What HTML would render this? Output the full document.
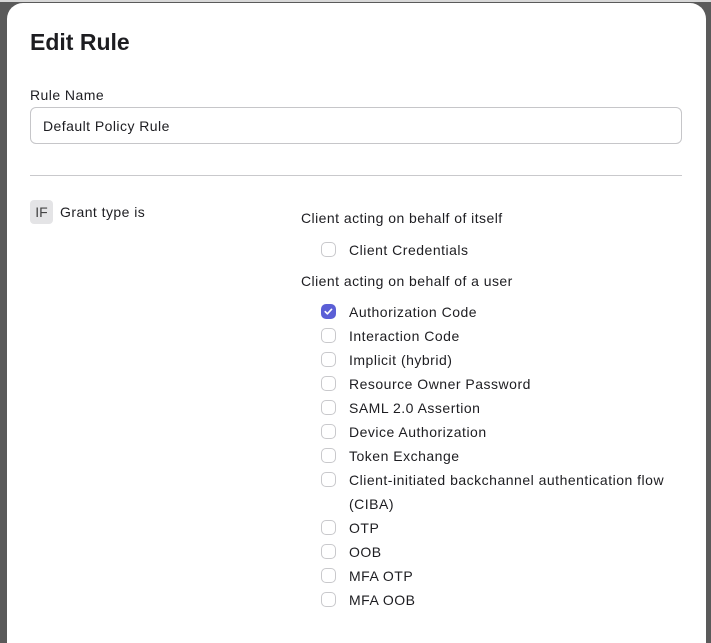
<!DOCTYPE html>
<html><head><style>
body{margin:0;width:711px;height:629px;overflow:hidden;background:#5a5a5a;font-family:"Liberation Sans",sans-serif;position:relative}
.top{position:absolute;left:0;top:0;width:711px;height:2px;background:#d8d8d8}
.modal{position:absolute;left:7px;top:3px;width:699px;height:640px;background:#fff;border-radius:16px 16px 0 0}
.a{position:absolute;color:#1d1d21;white-space:nowrap;letter-spacing:0.45px}
.cb{position:absolute;left:321px;width:13px;height:13px;border:1.5px solid #c9c9cc;border-radius:5px;background:#fff}
.lbl{position:absolute;left:349px;font-size:14px;color:#1d1d21;letter-spacing:0.5px;white-space:nowrap}
</style></head><body>
<div class="top"></div>
<div class="modal"></div>
<div class="a" style="left:30px;top:29px;font-size:23px;font-weight:bold;letter-spacing:0px">Edit Rule</div>
<div class="a" style="left:30px;top:87px;font-size:14px">Rule Name</div>
<div style="position:absolute;left:30px;top:107px;width:650px;height:35px;border:1px solid #c6c6c9;border-radius:6px;background:#fff"></div>
<div class="a" style="left:43px;top:118px;font-size:14px">Default Policy Rule</div>
<div style="position:absolute;left:30px;top:175px;width:652px;height:1px;background:#c9c9cc"></div>
<div style="position:absolute;left:30px;top:200px;width:23px;height:24px;background:#e4e4e6;border-radius:4px;font-size:14px;color:#444;text-align:center;line-height:24px">IF</div>
<div class="a" style="left:60px;top:204px;font-size:14px">Grant type is</div>
<div class="a" style="left:301px;top:210px;font-size:14px">Client acting on behalf of itself</div>
<div class="cb" style="top:242px"></div><div class="lbl" style="top:242px">Client Credentials</div>
<div class="a" style="left:301px;top:273px;font-size:14px">Client acting on behalf of a user</div>
<div class="cb" style="top:304px;background:#5b5fd6;border-color:#5b5fd6"><svg width="13" height="13" viewBox="0 0 14 14" style="position:absolute;left:0;top:0"><path d="M3.5 7.2l2.3 2.3 4.5-4.8" stroke="#fff" stroke-width="1.8" fill="none" stroke-linecap="round" stroke-linejoin="round"/></svg></div><div class="lbl" style="top:304px">Authorization Code</div>
<div class="cb" style="top:328px"></div><div class="lbl" style="top:328px">Interaction Code</div>
<div class="cb" style="top:352px"></div><div class="lbl" style="top:352px">Implicit (hybrid)</div>
<div class="cb" style="top:376px"></div><div class="lbl" style="top:376px">Resource Owner Password</div>
<div class="cb" style="top:400px"></div><div class="lbl" style="top:400px">SAML 2.0 Assertion</div>
<div class="cb" style="top:424px"></div><div class="lbl" style="top:424px">Device Authorization</div>
<div class="cb" style="top:448px"></div><div class="lbl" style="top:448px">Token Exchange</div>
<div class="cb" style="top:472px"></div><div class="lbl" style="top:472px">Client-initiated backchannel authentication flow</div>
<div class="lbl" style="top:496px">(CIBA)</div>
<div class="cb" style="top:520px"></div><div class="lbl" style="top:520px">OTP</div>
<div class="cb" style="top:544px"></div><div class="lbl" style="top:544px">OOB</div>
<div class="cb" style="top:568px"></div><div class="lbl" style="top:568px">MFA OTP</div>
<div class="cb" style="top:592px"></div><div class="lbl" style="top:592px">MFA OOB</div>
</body></html>
